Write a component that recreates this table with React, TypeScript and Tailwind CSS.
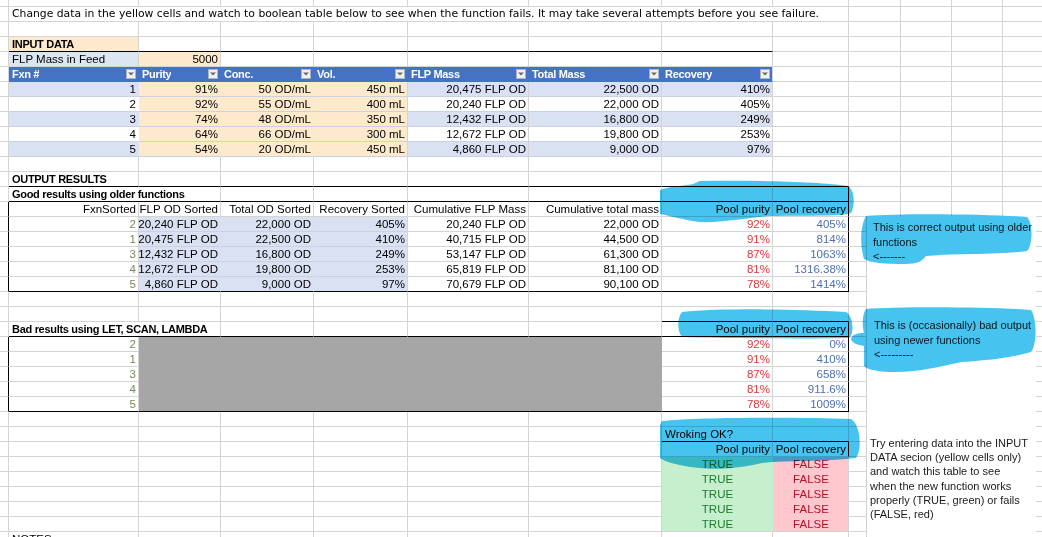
import React from "react";

type B = "g" | "k" | "n" | "b";
type Spec = {
  t?: React.ReactNode;
  span?: number;
  al?: "l" | "r" | "c";
  bg?: string;
  tc?: string;
  bold?: boolean;
  r?: B;
  b?: B;
  dd?: boolean;
  top?: boolean;
};

const GRID =
  "grid grid-cols-[9px_130px_82px_93px_94px_121px_133px_111px_76px_52px_51px_51px_60px]";

const RB: Record<B, string> = {
  g: "border-r border-r-[#d4d4d4]",
  k: "border-r border-r-black",
  n: "border-r border-r-transparent",
  b: "border-r border-r-[#c6cfdf]",
};
const BB: Record<B, string> = {
  g: "border-b border-b-[#d4d4d4]",
  k: "border-b border-b-black",
  n: "border-b border-b-transparent",
  b: "border-b border-b-[#c9d1e2]",
};
const SPAN: Record<number, string> = {
  1: "col-span-1",
  2: "col-span-2",
  3: "col-span-3",
  4: "col-span-4",
  5: "col-span-5",
  6: "col-span-6",
  7: "col-span-7",
  8: "col-span-8",
};
const AL = { l: "justify-start", r: "justify-end", c: "justify-center" };

const P = "bg-[#fde9cb]";
const LB = "bg-[#d9e1f2]";
const HB = "bg-[#4472c4]";
const OLIVE = "text-[#6e8c5a]";
const RED = "text-[#d63a3a]";
const BLUE = "text-[#5070b0]";

const TOPTEXT =
  "Change data in the yellow cells and watch to boolean table below to see when the function fails. It may take several attempts before you see failure.";

function Dropdown() {
  return (
    <span className="ml-[2px] flex h-[10px] w-[10px] shrink-0 items-center justify-center border border-[#a9b3c4] bg-[#f1f1f1]">
      <svg width="6" height="4" viewBox="0 0 6 4">
        <path d="M0 0.5 L6 0.5 L3 3.5 Z" fill="#6a6a6a" />
      </svg>
    </span>
  );
}

function Cell({ s }: { s: Spec }) {
  const boldCls = s.bold ? "font-bold text-[11px] tracking-[-0.3px]" : "";
  const fontCls = s.top ? "font-['DejaVu_Sans',sans-serif] text-[10.8px]" : "";
  return (
    <div
      className={`${SPAN[s.span ?? 1]} ${RB[s.r ?? "g"]} ${BB[s.b ?? "g"]} ${
        s.bg ?? ""
      } flex items-center ${s.dd ? "justify-between" : AL[s.al ?? "l"]} overflow-hidden whitespace-nowrap pl-[3px] pr-[2px] leading-[14px] ${boldCls} ${fontCls} ${
        s.tc ?? "text-black"
      }`}
    >
      {s.t !== undefined && <span className={s.dd ? "overflow-hidden" : ""}>{s.t}</span>}
      {s.dd && <Dropdown />}
    </div>
  );
}

function fill(specs: Spec[]): Spec[] {
  const out = [...specs];
  let n = out.reduce((a, s) => a + (s.span ?? 1), 0);
  while (n < 13) {
    out.push({});
    n++;
  }
  return out;
}

const E: Spec = {};
const pre = (r: B = "g"): Spec => ({ r });

const rows: Spec[][] = [];
// r1
rows.push([pre(), { span: 8, t: TOPTEXT, top: true }]);
// r2
rows.push([]);
// r3
rows.push([
  pre(),
  { t: "INPUT DATA", bold: true, bg: P, b: "k" },
  { b: "k" },
  { b: "k" },
  { b: "k" },
  { b: "k" },
  { b: "k" },
  { b: "k" },
]);
// r4
rows.push([
  pre(),
  { t: "FLP Mass in Feed", bg: "bg-[#dce6f1]" },
  { t: "5000", al: "r", bg: P },
]);
// r5 header
rows.push([
  pre(),
  ...["Fxn #", "Purity", "Conc.", "Vol.", "FLP Mass", "Total Mass", "Recovery"].map(
    (t, i): Spec => ({
      t,
      bold: true,
      tc: "text-white",
      bg: HB,
      dd: true,
      r: i === 6 ? "g" : "n",
      b: "n",
    })
  ),
]);
// r6-10
const inp = [
  ["1", "91%", "50 OD/mL", "450 mL", "20,475 FLP OD", "22,500 OD", "410%"],
  ["2", "92%", "55 OD/mL", "400 mL", "20,240 FLP OD", "22,000 OD", "405%"],
  ["3", "74%", "48 OD/mL", "350 mL", "12,432 FLP OD", "16,800 OD", "249%"],
  ["4", "64%", "66 OD/mL", "300 mL", "12,672 FLP OD", "19,800 OD", "253%"],
  ["5", "54%", "20 OD/mL", "450 mL", "4,860 FLP OD", "9,000 OD", "97%"],
];
inp.forEach((d, i) => {
  const band = i % 2 === 0 ? LB : "bg-white";
  rows.push([
    pre(),
    { t: d[0], al: "r", bg: band, r: "n", b: "b" },
    { t: d[1], al: "r", bg: P, r: "n", b: "b" },
    { t: d[2], al: "r", bg: P, r: "n", b: "b" },
    { t: d[3], al: "r", bg: P, r: "g", b: "b" },
    { t: d[4], al: "r", bg: band, b: "b" },
    { t: d[5], al: "r", bg: band, b: "b" },
    { t: d[6], al: "r", bg: band, b: "b" },
  ]);
});
// r11
rows.push([]);
// r12
rows.push([
  pre(),
  { t: "OUTPUT RESULTS", bold: true, b: "k" },
  { b: "k" },
  { b: "k" },
  { b: "k" },
  { b: "k" },
  { b: "k" },
  { b: "k" },
  { b: "k" },
]);
// r13
rows.push([
  pre(),
  { span: 2, t: "Good results using older functions", bold: true, b: "k" },
  { b: "k" },
  { b: "k" },
  { b: "k" },
  { b: "k" },
  { b: "k" },
  { b: "k", r: "k" },
]);
// r14
rows.push([
  pre("k"),
  { t: "FxnSorted", al: "r" },
  { t: "FLP OD Sorted", al: "r" },
  { t: "Total OD Sorted", al: "r" },
  { t: "Recovery Sorted", al: "r" },
  { t: "Cumulative FLP Mass", al: "r" },
  { t: "Cumulative total mass", al: "r" },
  { t: "Pool purity", al: "r" },
  { t: "Pool recovery", al: "r", r: "k" },
]);
// r15-19
const out = [
  ["2", "20,240 FLP OD", "22,000 OD", "405%", "20,240 FLP OD", "22,000 OD", "92%", "405%"],
  ["1", "20,475 FLP OD", "22,500 OD", "410%", "40,715 FLP OD", "44,500 OD", "91%", "814%"],
  ["3", "12,432 FLP OD", "16,800 OD", "249%", "53,147 FLP OD", "61,300 OD", "87%", "1063%"],
  ["4", "12,672 FLP OD", "19,800 OD", "253%", "65,819 FLP OD", "81,100 OD", "81%", "1316.38%"],
  ["5", "4,860 FLP OD", "9,000 OD", "97%", "70,679 FLP OD", "90,100 OD", "78%", "1414%"],
];
out.forEach((d, i) => {
  const last = i === 4;
  const bb: B = last ? "k" : "g";
  const bl: B = last ? "k" : "b";
  rows.push([
    pre("k"),
    { t: d[0], al: "r", tc: OLIVE, b: bb },
    { t: d[1], al: "r", bg: LB, r: "n", b: bl },
    { t: d[2], al: "r", bg: LB, r: "n", b: bl },
    { t: d[3], al: "r", bg: LB, r: "g", b: bl },
    { t: d[4], al: "r", b: bb },
    { t: d[5], al: "r", b: bb },
    { t: d[6], al: "r", tc: RED, b: bb },
    { t: d[7], al: "r", tc: BLUE, r: "k", b: bb },
  ]);
});
// r20
rows.push([]);
// r21
rows.push([pre(), E, E, E, E, E, E, { b: "k" }, { b: "k" }]);
// r22
rows.push([
  pre(),
  { span: 2, t: "Bad results using LET, SCAN, LAMBDA", bold: true, b: "k" },
  { b: "k" },
  { b: "k" },
  { b: "k" },
  { b: "k" },
  { t: "Pool purity", al: "r", b: "k" },
  { t: "Pool recovery", al: "r", b: "k", r: "k" },
]);
// r23-27
const bad = [
  ["2", "92%", "0%"],
  ["1", "91%", "410%"],
  ["3", "87%", "658%"],
  ["4", "81%", "911.6%"],
  ["5", "78%", "1009%"],
];
bad.forEach((d, i) => {
  const last = i === 4;
  rows.push([
    pre("k"),
    { t: d[0], al: "r", tc: OLIVE, b: last ? "k" : "g" },
    { span: 5, bg: "bg-[#a6a6a6]", r: "n", b: last ? "k" : "n" },
    { t: d[1], al: "r", tc: RED, b: last ? "k" : "g" },
    { t: d[2], al: "r", tc: BLUE, r: "k", b: last ? "k" : "g" },
  ]);
});
// r28
rows.push([]);
// r29
rows.push([pre(), E, E, E, E, E, E, { t: "Wroking OK?", b: "k" }, { b: "k" }]);
// r30
rows.push([
  pre(),
  E,
  E,
  E,
  E,
  E,
  E,
  { t: "Pool purity", al: "r" },
  { t: "Pool recovery", al: "r", r: "k" },
]);
// r31-35
for (let i = 0; i < 5; i++) {
  const last = i === 4;
  rows.push([
    pre(),
    E,
    E,
    E,
    E,
    E,
    E,
    {
      t: "TRUE",
      al: "c",
      bg: "bg-[#c6efce]",
      tc: "text-[#1e7a2c]",
      r: "n",
      b: last ? "g" : "n",
    },
    {
      t: "FALSE",
      al: "c",
      bg: "bg-[#ffc7ce]",
      tc: "text-[#b4122a]",
      b: last ? "g" : "n",
    },
  ]);
}
// r36
rows.push([pre(), { t: "NOTES" }]);

function Row({ specs, h = "h-[15px]" }: { specs: Spec[]; h?: string }) {
  return (
    <div className={`${GRID} ${h}`}>
      {fill(specs).map((s, i) => (
        <Cell key={i} s={s} />
      ))}
    </div>
  );
}

function Scribbles() {
  return (
    <svg
      className="pointer-events-none absolute left-0 top-0 mix-blend-multiply"
      width="1042"
      height="537"
      viewBox="0 0 1042 537"
    >
      <g fill="#47c3f0">
        <path d="M660,190 C670,186 684,186 693,184 L700,181 C760,180 820,182 848,186 C855,190 855,206 851,213 C840,217 800,215 770,216 C745,218 722,223 700,222 C684,220 670,216 660,214 Z" />
        <path d="M866,216 C900,213 990,214 1027,217 C1033,222 1033,245 1027,251 C1000,255 962,253 926,256 C922,261 918,264 905,264 C885,264 870,263 864,259 C860,246 860,226 866,216 Z" />
        <path d="M682,312 C720,308 800,309 846,312 C854,317 854,334 849,338 C800,339 720,338 682,337 C677,331 677,318 682,312 Z" />
        <path d="M866,309 C900,306 1000,307 1031,310 C1037,318 1037,345 1031,352 C1010,358 990,360 962,362 C942,366 920,372 895,372 C880,372 868,370 864,366 L864,346 C858,345 852,343 851,339 C852,334 858,333 864,333 C862,325 862,315 866,309 Z" />
        <path d="M662,421 C700,417 800,417 851,419 C861,425 862,450 856,458 C822,462 790,460 762,463 C742,468 716,470 700,468 C680,466 665,462 660,458 L660,425 Z" />
      </g>
    </svg>
  );
}

export default function App() {
  return (
    <div className="relative h-[537px] w-[1042px] overflow-hidden bg-white font-['Liberation_Sans',Arial,sans-serif] text-[11.5px] text-black">
      <Row specs={[]} h="h-[7px]" />
      {rows.map((r, i) => (
        <Row key={i} specs={r} />
      ))}

      <div className="absolute left-[866px] top-[216px] h-[321px] w-[170px] border-l border-l-[#cfcfcf] bg-white text-[11px] leading-[14.5px] text-[#1a1a1a]">
        <div className="absolute left-[6px] top-[4px] whitespace-nowrap">
          This is correct output using older
          <br />
          functions
          <br />
          {"<-------"}
        </div>
        <div className="absolute left-[7px] top-[102px] whitespace-nowrap">
          This is (occasionally) bad output
          <br />
          using newer functions
          <br />
          {"<---------"}
        </div>
        <div className="absolute left-[3px] top-[220px] whitespace-nowrap leading-[14.2px]">
          Try entering data into the INPUT
          <br />
          DATA secion (yellow cells only)
          <br />
          and watch this table to see
          <br />
          when the new function works
          <br />
          properly (TRUE, green) or fails
          <br />
          (FALSE, red)
        </div>
      </div>

      <Scribbles />
    </div>
  );
}
